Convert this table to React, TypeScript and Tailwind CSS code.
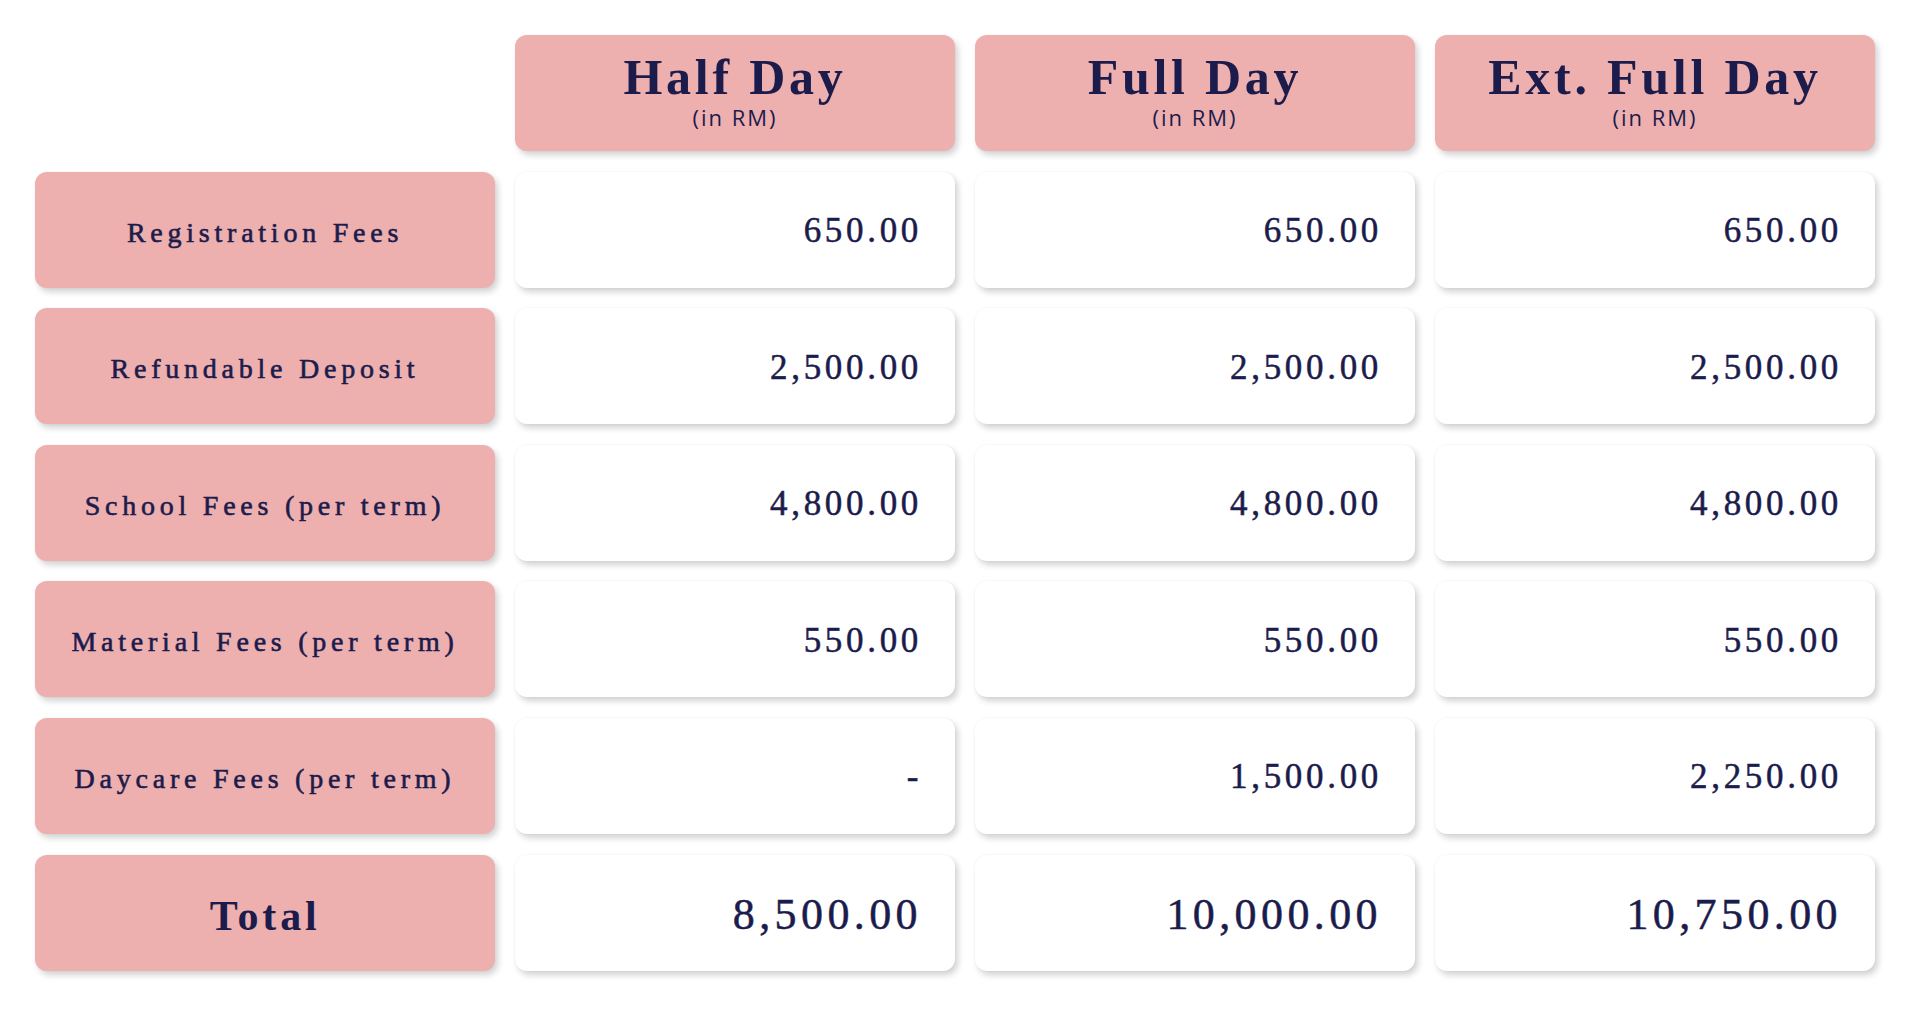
import React from "react";

// fee table data (amounts in RM)
const plans = ["Half Day", "Full Day", "Ext. Full Day"];

const rows = [
  { label: "Registration Fees", values: ["650.00", "650.00", "650.00"] },
  { label: "Refundable Deposit", values: ["2,500.00", "2,500.00", "2,500.00"] },
  { label: "School Fees (per term)", values: ["4,800.00", "4,800.00", "4,800.00"] },
  { label: "Material Fees (per term)", values: ["550.00", "550.00", "550.00"] },
  { label: "Daycare Fees (per term)", values: ["-", "1,500.00", "2,250.00"] },
];

const totals = ["8,500.00", "10,000.00", "10,750.00"];

const serif = "font-['Liberation_Serif',_'Times_New_Roman',_serif]";
const cardShadow =
  "shadow-[3px_4px_6px_rgba(0,0,0,0.18),0_0_2px_rgba(0,0,0,0.06)]";

const PinkCell: React.FC<{ children: React.ReactNode; className?: string }> = ({
  children,
  className = "",
}) => (
  <div
    className={`h-[116px] rounded-xl bg-[#eeafaf] text-[#1b1c4c] ${cardShadow} ${className}`}
  >
    {children}
  </div>
);

const ValueCell: React.FC<{ value: string; total?: boolean }> = ({ value, total }) => (
  <div
    className={`h-[116px] rounded-xl bg-white text-[#1b1c4c] flex items-center justify-end ${cardShadow} ${
      total ? "pr-[33px] pt-[5px]" : "pr-[33px] pt-[2px]"
    }`}
  >
    <span
      className={`${serif} leading-none [-webkit-text-stroke:0.5px_#1b1c4c] ${
        total ? "text-[44px] tracking-[0.1em]" : "text-[35px] tracking-[0.105em]"
      }`}
    >
      {value}
    </span>
  </div>
);

const App: React.FC = () => {
  return (
    <div className="min-h-[1015px] w-full bg-white pt-[35px] pl-[35px]">
      <div className="grid grid-cols-[460px_440px_440px_440px] gap-x-[20px] gap-y-[20.6px]">
        {/* header row */}
        <div />
        {plans.map((p) => (
          <PinkCell key={p} className="flex flex-col items-center pt-[17px]">
            <span className={`${serif} font-bold text-[50px] leading-none tracking-[0.075em]`}>
              {p}
            </span>
            <span className="mt-[4px] font-['Open_Sans',_sans-serif] font-normal text-[22px] leading-none tracking-[0.09em]">
              (in RM)
            </span>
          </PinkCell>
        ))}

        {/* fee rows */}
        {rows.map((r) => (
          <React.Fragment key={r.label}>
            <PinkCell className="flex items-center justify-center pt-[6px]">
              <span
                className={`${serif} text-[28px] leading-none tracking-[0.17em] [-webkit-text-stroke:0.6px_#1b1c4c]`}
              >
                {r.label}
              </span>
            </PinkCell>
            {r.values.map((v, i) => (
              <ValueCell key={i} value={v} />
            ))}
          </React.Fragment>
        ))}

        {/* total */}
        <PinkCell className="flex items-center justify-center pt-[6px]">
          <span className={`${serif} font-bold text-[42px] leading-none tracking-[0.09em]`}>
            Total
          </span>
        </PinkCell>
        {totals.map((t, i) => (
          <ValueCell key={i} value={t} total />
        ))}
      </div>
    </div>
  );
};

export default App;
